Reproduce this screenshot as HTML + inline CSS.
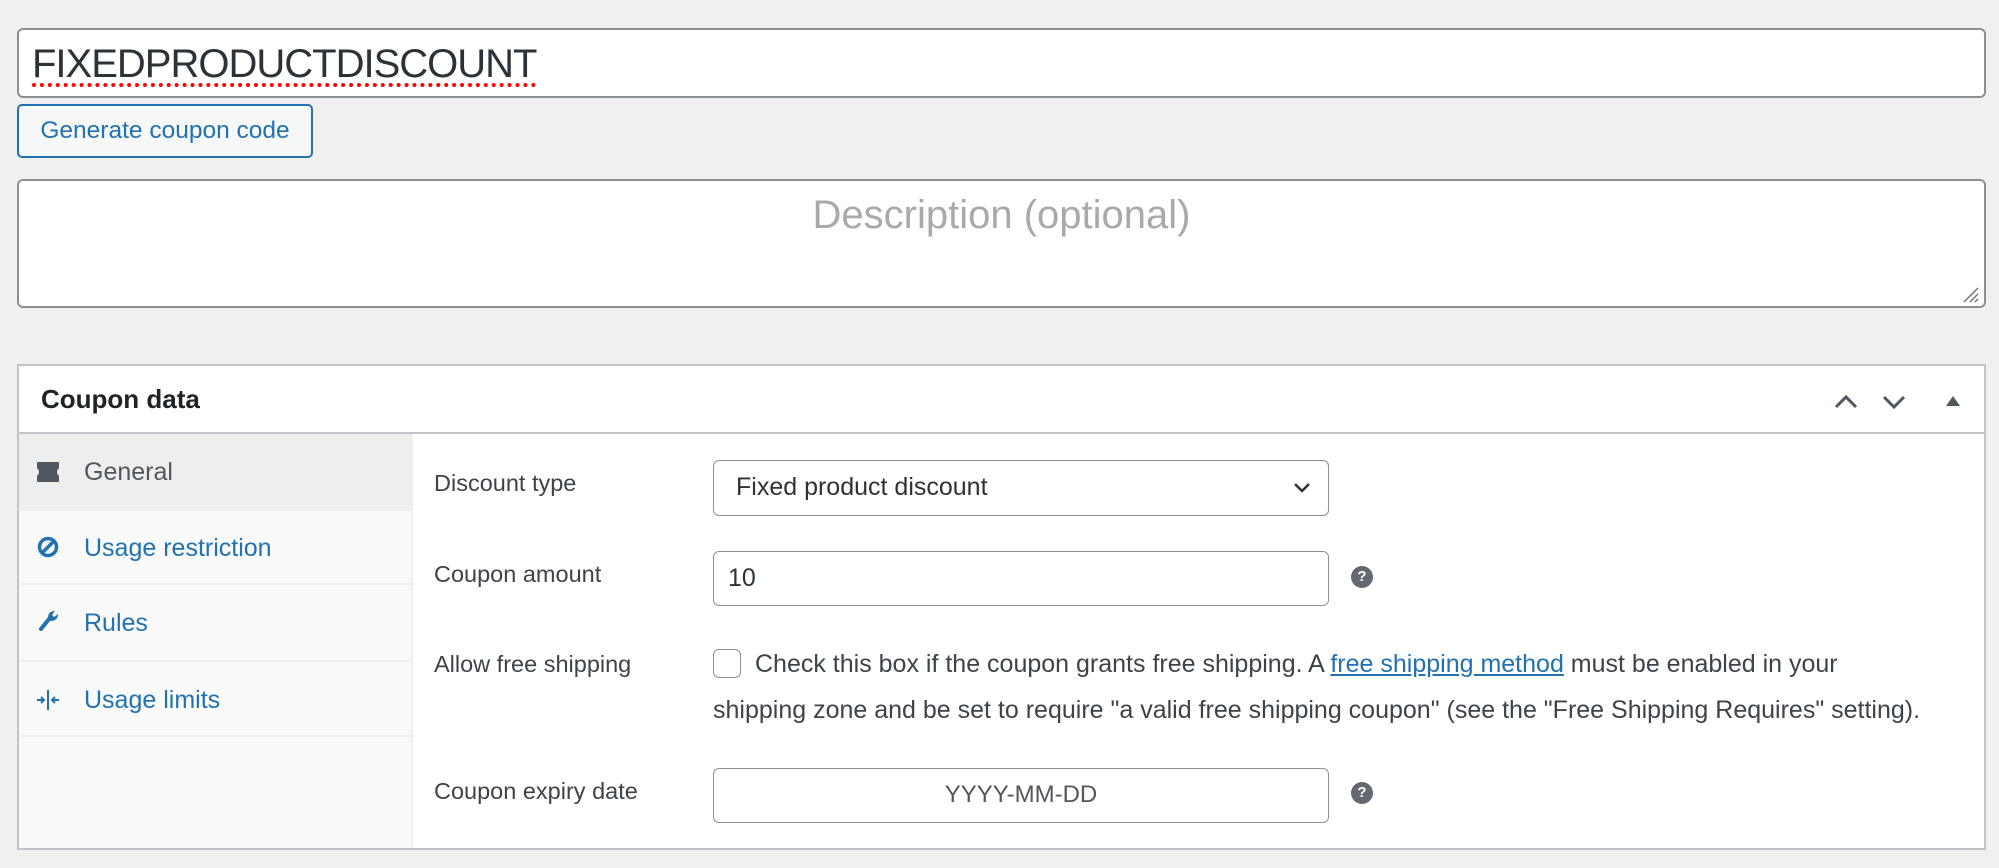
<!DOCTYPE html>
<html><head><meta charset="utf-8"><style>
body{margin:0;width:1999px;height:868px;background:#f0f0f1;font-family:"Liberation Sans",Arial,sans-serif;position:relative;overflow:hidden;color:#3c434a}
.abs{position:absolute}
.inp{position:absolute;background:#fff;border:2px solid #8c8f94;border-radius:6px;box-sizing:border-box}
.lbl{position:absolute;left:434px;font-size:23.5px;color:#3c434a;line-height:26px}
.tab{position:absolute;left:17px;width:394px;box-sizing:border-box;border-bottom:2px solid #eee;background:#fafafa}
.tab span{position:absolute;left:67px;font-size:25px;color:#2271b1;line-height:28px}
.help{position:absolute;width:22px;height:22px;border-radius:50%;background:#646970;color:#fff;font-size:15px;font-weight:bold;text-align:center;line-height:22px}
</style></head><body>
<div class="inp" style="left:17px;top:28px;width:1969px;height:70px"></div>
<div class="abs" style="left:32px;top:41px;font-size:40px;color:#2c3338;line-height:46px;letter-spacing:-1px;text-decoration:underline dotted red;text-underline-offset:6px">FIXEDPRODUCTDISCOUNT</div>
<div class="abs" style="left:17px;top:104px;width:296px;height:54px;box-sizing:border-box;border:2px solid #2271b1;border-radius:5px;background:#f6f7f7;color:#2271b1;font-size:24.5px;line-height:50px;text-align:center">Generate coupon code</div>
<div class="inp" style="left:17px;top:179px;width:1969px;height:129px"></div>
<div class="abs" style="left:17px;width:1969px;top:193px;text-align:center;font-size:40px;color:#a7aaad">Description (optional)</div>
<svg class="abs" style="left:1958px;top:282px" width="22" height="22"><path d="M20 6L6 20M20 12L12 20M20 17L17 20" stroke="#777" stroke-width="1.5"/></svg>

<div class="abs" style="left:17px;top:364px;width:1969px;height:486px;box-sizing:border-box;border:2px solid #c3c4c7;background:#fff"></div>
<div class="abs" style="left:19px;top:432px;width:1965px;height:2px;background:#c3c4c7"></div>
<div class="abs" style="left:41px;top:384px;font-size:26px;font-weight:bold;color:#1d2327">Coupon data</div>
<svg class="abs" style="left:1834px;top:389px" width="140" height="24"><path d="M2 18L12 8L22 18" stroke="#50575e" stroke-width="3" fill="none"/><path d="M50 8L60 18L70 8" stroke="#50575e" stroke-width="3" fill="none"/><path d="M112 17L119 7L126 17Z" fill="#50575e"/></svg>

<div class="abs" style="left:19px;top:434px;width:392px;height:414px;background:#fafafa;border-right:2px solid #eee"></div>
<div class="tab" style="top:434px;height:77px;background:#eee;left:19px;width:392px"><svg class="abs" style="left:18px;top:28px" width="22" height="20"><path d="M0 0H22V6Q18 10 22 14V20H0V14Q4 10 0 6Z" fill="#50575e"/></svg><span style="top:24px;left:65px;color:#50575e">General</span></div>
<div class="tab" style="top:511px;height:74px;left:19px;width:392px"><svg class="abs" style="left:18px;top:25px" width="22" height="22"><circle cx="11" cy="11" r="8.5" stroke="#2271b1" stroke-width="3.5" fill="none"/><path d="M6 16L16 6" stroke="#2271b1" stroke-width="3.5"/></svg><span style="top:23px;left:65px">Usage restriction</span></div>
<div class="tab" style="top:585px;height:77px;left:19px;width:392px"><svg class="abs" style="left:18px;top:24px" width="22" height="22"><path d="M4 20L12 10" stroke="#2271b1" stroke-width="4" stroke-linecap="round"/><path d="M11 9Q11 2 18 2L15 6L17 8L21 5Q21 12 13 12Z" fill="#2271b1"/></svg><span style="top:24px;left:65px">Rules</span></div>
<div class="tab" style="top:662px;height:75px;left:19px;width:392px"><svg class="abs" style="left:18px;top:27px" width="22" height="22"><path d="M11 1V21M0 11H7M4 8L7 11L4 14M22 11H15M18 8L15 11L18 14" stroke="#2271b1" stroke-width="2" fill="none"/></svg><span style="top:24px;left:65px">Usage limits</span></div>

<div class="lbl" style="top:470px">Discount type</div>
<div class="lbl" style="top:561px">Coupon amount</div>
<div class="lbl" style="top:651px">Allow free shipping</div>
<div class="lbl" style="top:778px">Coupon expiry date</div>

<div class="inp" style="left:713px;top:460px;width:616px;height:56px;border-width:1.5px;border-color:#8c8f94"></div>
<div class="abs" style="left:736px;top:473px;font-size:25px;color:#2c3338">Fixed product discount</div>
<svg class="abs" style="left:1293px;top:481px" width="18" height="14"><path d="M2 3L9 10L16 3" stroke="#2c3338" stroke-width="2.5" fill="none"/></svg>

<div class="inp" style="left:713px;top:551px;width:616px;height:55px;border-width:1.5px"></div>
<div class="abs" style="left:728px;top:564px;font-size:25px;color:#2c3338">10</div>
<div class="help" style="left:1351px;top:566px">?</div>

<div class="inp" style="left:713px;top:649px;width:28px;height:29px;border-width:1.5px"></div>
<div class="abs" style="left:755px;top:650px;font-size:25px;line-height:28px;white-space:nowrap">Check this box if the coupon grants free shipping. A <span style="color:#2271b1;text-decoration:underline">free shipping method</span> must be enabled in your</div>
<div class="abs" style="left:713px;top:696px;font-size:25px;line-height:28px;white-space:nowrap">shipping zone and be set to require "a valid free shipping coupon" (see the "Free Shipping Requires" setting).</div>

<div class="inp" style="left:713px;top:768px;width:616px;height:55px;border-width:1.5px"></div>
<div class="abs" style="left:713px;width:616px;top:781px;text-align:center;font-size:24px;color:#50575e">YYYY-MM-DD</div>
<div class="help" style="left:1351px;top:782px">?</div>
</body></html>
